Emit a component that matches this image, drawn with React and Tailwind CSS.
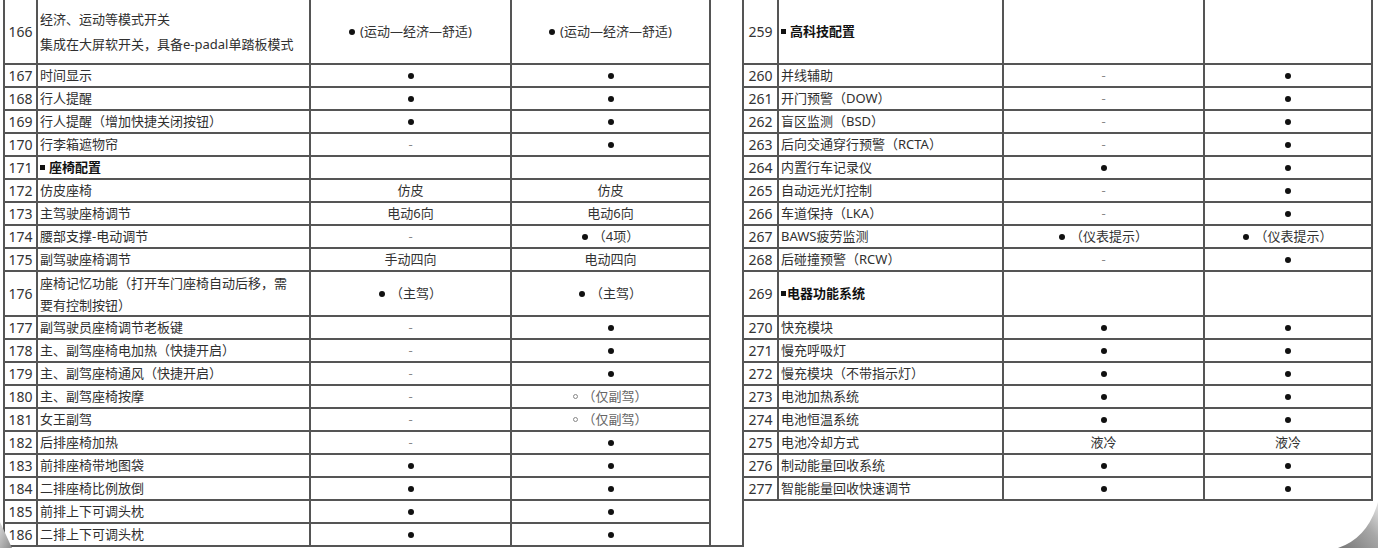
import React from "react";

const left = [
  { n: 166, tall: "top", item: ["经济、运动等模式开关", "集成在大屏软开关，具备e-padal单踏板模式"], a: "d:(运动—经济—舒适)", b: "d:(运动—经济—舒适)" },
  { n: 167, item: "时间显示", a: "●", b: "●" },
  { n: 168, item: "行人提醒", a: "●", b: "●" },
  { n: 169, item: "行人提醒（增加快捷关闭按钮）", a: "●", b: "●" },
  { n: 170, item: "行李箱遮物帘", a: "-", b: "●" },
  { n: 171, head: "座椅配置", a: "", b: "" },
  { n: 172, item: "仿皮座椅", a: "仿皮", b: "仿皮" },
  { n: 173, item: "主驾驶座椅调节", a: "电动6向", b: "电动6向" },
  { n: 174, item: "腰部支撑-电动调节", a: "-", b: "d:（4项）" },
  { n: 175, item: "副驾驶座椅调节", a: "手动四向", b: "电动四向" },
  { n: 176, tall: "mid", item: ["座椅记忆功能（打开车门座椅自动后移，需", "要有控制按钮）"], a: "d:（主驾）", b: "d:（主驾）" },
  { n: 177, item: "副驾驶员座椅调节老板键", a: "-", b: "●" },
  { n: 178, item: "主、副驾座椅电加热（快捷开启）", a: "-", b: "●" },
  { n: 179, item: "主、副驾座椅通风（快捷开启）", a: "-", b: "●" },
  { n: 180, item: "主、副驾座椅按摩", a: "-", b: "o:（仅副驾）" },
  { n: 181, item: "女王副驾", a: "-", b: "o:（仅副驾）" },
  { n: 182, item: "后排座椅加热", a: "-", b: "●" },
  { n: 183, item: "前排座椅带地图袋", a: "●", b: "●" },
  { n: 184, item: "二排座椅比例放倒", a: "●", b: "●" },
  { n: 185, item: "前排上下可调头枕", a: "●", b: "●" },
  { n: 186, item: "二排上下可调头枕", a: "●", b: "●" },
];

const right = [
  { n: 259, tall: "top", head: "高科技配置", a: "", b: "" },
  { n: 260, item: "并线辅助", a: "-", b: "●" },
  { n: 261, item: "开门预警（DOW）", a: "-", b: "●" },
  { n: 262, item: "盲区监测（BSD）", a: "-", b: "●" },
  { n: 263, item: "后向交通穿行预警（RCTA）", a: "-", b: "●" },
  { n: 264, item: "内置行车记录仪", a: "●", b: "●" },
  { n: 265, item: "自动远光灯控制", a: "-", b: "●" },
  { n: 266, item: "车道保持（LKA）", a: "-", b: "●" },
  { n: 267, item: "BAWS疲劳监测", a: "d:（仪表提示）", b: "d:（仪表提示）" },
  { n: 268, item: "后碰撞预警（RCW）", a: "-", b: "●" },
  { n: 269, tall: "mid", head: "电器功能系统", tight: true, a: "", b: "" },
  { n: 270, item: "快充模块", a: "●", b: "●" },
  { n: 271, item: "慢充呼吸灯", a: "●", b: "●" },
  { n: 272, item: "慢充模块（不带指示灯）", a: "●", b: "●" },
  { n: 273, item: "电池加热系统", a: "●", b: "●" },
  { n: 274, item: "电池恒温系统", a: "●", b: "●" },
  { n: 275, item: "电池冷却方式", a: "液冷", b: "液冷" },
  { n: 276, item: "制动能量回收系统", a: "●", b: "●" },
  { n: 277, item: "智能能量回收快速调节", a: "●", b: "●" },
];

function Dot() {
  return <span className="inline-block w-[6px] h-[6px] rounded-full bg-[#111]" />;
}

// "●" dot, "-" dash, "d:.." dot + text, "o:.." hollow dot + text, else plain text
function Value({ v }) {
  if (!v) return null;
  if (v === "●") return <Dot />;
  if (v === "-") return <span className="text-[#888]">-</span>;
  if (v.startsWith("d:"))
    return (
      <span className="inline-flex items-center gap-[5px]">
        <Dot />
        <span>{v.slice(2)}</span>
      </span>
    );
  if (v.startsWith("o:"))
    return (
      <span className="inline-flex items-center gap-[4px] text-[#666]">
        <span className="inline-block w-[5px] h-[5px] rounded-full border border-[#888]" />
        <span>{v.slice(2)}</span>
      </span>
    );
  return <span>{v}</span>;
}

function Row({ r, cols }) {
  const h = r.tall === "top" ? "h-[65px]" : r.tall === "mid" ? "h-[45px]" : "h-[23px]";
  return (
    <div className={`flex ${h} border-b-2 border-[#555]`}>
      <div className={`${cols[0]} shrink-0 border-r-2 border-[#555] flex items-center justify-center text-[14px] text-[#333]`}>
        {r.n}
      </div>
      <div className={`${cols[1]} shrink-0 border-r-2 border-[#555] flex items-center pl-[2px] text-[#2f2f2f]`}>
        {r.head ? (
          <span className={`flex items-center font-bold text-[#111] ${r.tight ? "gap-[1px]" : "gap-[4px]"}`}>
            <span className="inline-block w-[5px] h-[5px] bg-[#111]" />
            <span>{r.head}</span>
          </span>
        ) : Array.isArray(r.item) ? (
          <div className={`flex flex-col ${r.tall === "top" ? "gap-[6px] leading-[19px]" : "leading-[22px]"}`}>
            {r.item.map((t) => (
              <span key={t}>{t}</span>
            ))}
          </div>
        ) : (
          <span>{r.item}</span>
        )}
      </div>
      <div className={`${cols[2]} shrink-0 border-r-2 border-[#555] flex items-center justify-center text-[#333]`}>
        <Value v={r.a} />
      </div>
      <div className={`${cols[3]} shrink-0 border-r-2 border-[#555] flex items-center justify-center text-[#333]`}>
        <Value v={r.b} />
      </div>
    </div>
  );
}

export default function App() {
  const leftCols = ["w-[33px]", "w-[273px]", "w-[201px]", "w-[199px]"];
  const rightCols = ["w-[35px]", "w-[225px]", "w-[201px]", "w-[168px]"];
  return (
    <div
      className="relative w-[1378px] h-[548px] overflow-hidden bg-white text-[13px]"
      style={{ fontFamily: '"Noto Sans", "Noto Sans CJK SC", sans-serif' }}
    >
      <div className="flex h-full pl-[3px]">
        <div className="border-l-2 border-[#555] self-start">
          {left.map((r) => (
            <Row key={r.n} r={r} cols={leftCols} />
          ))}
        </div>
        <div className="w-[31px] h-[547px] border-b-2 border-[#555]" />
        <div className="border-l-2 border-[#555] h-[547px]">
          {right.map((r) => (
            <Row key={r.n} r={r} cols={rightCols} />
          ))}
        </div>
      </div>

      {/* page curl corners */}
      <svg className="absolute left-0 bottom-0" width="14" height="26" viewBox="0 0 14 26">
        <defs>
          <linearGradient id="cl" x1="0" y1="0" x2="1" y2="1">
            <stop offset="0" stopColor="#d8d8d8" />
            <stop offset="1" stopColor="#8a8a8a" />
          </linearGradient>
        </defs>
        <path d="M0 0 L12 26 L0 26 Z" fill="url(#cl)" />
      </svg>

      <svg className="absolute right-0 bottom-0" width="40" height="46" viewBox="0 0 40 46">
        <defs>
          <linearGradient id="cr" x1="0" y1="1" x2="1" y2="0">
            <stop offset="0" stopColor="#777" />
            <stop offset="0.6" stopColor="#a8a8a8" />
            <stop offset="1" stopColor="#e4e4e4" />
          </linearGradient>
        </defs>
        <path d="M0 46 Q30 36 40 0 L40 46 Z" fill="url(#cr)" />
      </svg>
    </div>
  );
}
